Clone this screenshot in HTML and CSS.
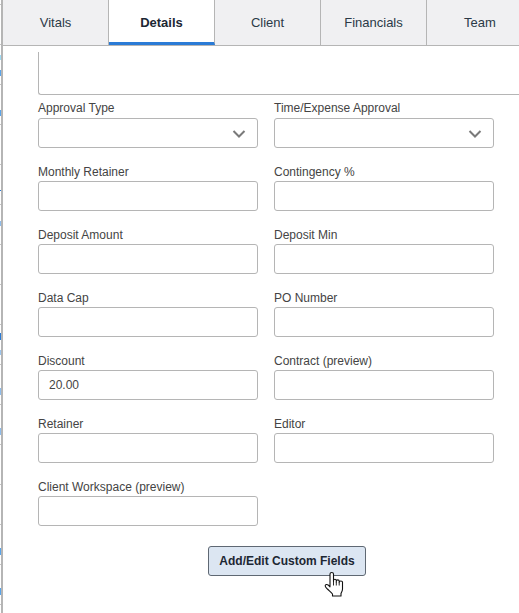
FILE: index.html
```html
<!DOCTYPE html>
<html lang="en">
<head>
<meta charset="utf-8">
<title>Details</title>
<link rel="stylesheet" href="styles.css">
</head>
<body>
<div class="page">
  <div class="strip"></div>
  <main class="main">
    <nav class="tabs">
      <a class="tab">Vitals</a>
      <a class="tab active">Details</a>
      <a class="tab">Client</a>
      <a class="tab">Financials</a>
      <a class="tab last">Team</a>
    </nav>
    <textarea class="notes"></textarea>
    <form class="form">
      <div class="field"><label>Approval Type</label>
        <div class="select"><select></select>
          <svg class="chev" viewBox="0 0 14 8" width="14" height="8"><path d="M1.5 1 7 6.5 12.5 1" fill="none" stroke="#7a7a7a" stroke-width="2"/></svg>
        </div></div>
      <div class="field"><label>Time/Expense Approval</label>
        <div class="select"><select></select>
          <svg class="chev" viewBox="0 0 14 8" width="14" height="8"><path d="M1.5 1 7 6.5 12.5 1" fill="none" stroke="#7a7a7a" stroke-width="2"/></svg>
        </div></div>
      <div class="field"><label>Monthly Retainer</label><input type="text"></div>
      <div class="field"><label>Contingency %</label><input type="text"></div>
      <div class="field"><label>Deposit Amount</label><input type="text"></div>
      <div class="field"><label>Deposit Min</label><input type="text"></div>
      <div class="field"><label>Data Cap</label><input type="text"></div>
      <div class="field"><label>PO Number</label><input type="text"></div>
      <div class="field"><label>Discount</label><input type="text" value="20.00"></div>
      <div class="field"><label>Contract (preview)</label><input type="text"></div>
      <div class="field"><label>Retainer</label><input type="text"></div>
      <div class="field"><label>Editor</label><input type="text"></div>
      <div class="field"><label>Client Workspace (preview)</label><input type="text"></div>
    </form>
    <div class="actions"><button type="button" class="btn">Add/Edit Custom Fields</button></div>
  </main>
</div>
<svg class="cursor" viewBox="0 0 20 26" width="20" height="26">
  <path d="M6 14.5V3C6 1 9.5 1 9.5 3V10.5V9.4C9.5 7.8 12.3 7.8 12.3 9.4V11V10C12.3 8.5 15.2 8.5 15.2 10V11.6V11C15.2 9.6 18.5 9.6 18.5 11V18C18.5 20 17.6 21 17 22.5V25H8.5V23C7 21.2 5.2 19.8 3.4 18 2.2 16.7 1 15.8 1.2 14.6 1.4 13.2 3.2 13.2 4.2 14 4.9 14.5 5.5 15.2 6 15.8Z" fill="#fff" stroke="#111" stroke-width="1.1" stroke-linejoin="round"/>
  <path d="M9.5 10.5V14.5M12.3 11V14.5M15.2 11.6V14.5" fill="none" stroke="#111" stroke-width=".9"/>
</svg>
</body>
</html>
```

FILE: styles.css
```css
* { box-sizing: border-box; }
html, body { margin: 0; padding: 0; background: #fff; }
body {
  width: 519px;
  height: 613px;
  overflow: hidden;
  position: relative;
  font-family: "Liberation Sans", Arial, sans-serif;
  color: #333;
}
.page { display: flex; height: 613px; }
.strip {
  flex: 0 0 3px;
  border-right: 2px solid #b5b5b5;
  background:
    linear-gradient(#9fdcf5,#9fdcf5) 0 55px/1px 5px no-repeat,
    linear-gradient(#5aa5ea,#5aa5ea) 0 70px/1px 6px no-repeat,
    linear-gradient(#5aa5ea,#5aa5ea) 0 110px/1px 6px no-repeat,
    linear-gradient(#2a7bd6,#2a7bd6) 0 190px/1px 1px no-repeat,
    linear-gradient(#8fbdec,#8fbdec) 0 221px/1px 5px no-repeat,
    linear-gradient(#2a7bd6,#2a7bd6) 0 333px/1px 7px no-repeat,
    linear-gradient(#9cc6ef,#9cc6ef) 0 350px/1px 5px no-repeat,
    linear-gradient(#8fbdec,#8fbdec) 0 388px/1px 7px no-repeat,
    linear-gradient(#8fbdec,#8fbdec) 0 428px/1px 7px no-repeat,
    linear-gradient(#5aa5ea,#5aa5ea) 0 548px/1px 7px no-repeat,
    linear-gradient(#5aa5ea,#5aa5ea) 0 588px/1px 7px no-repeat,
    repeating-linear-gradient(to bottom, transparent 0 4px, #c4c4c4 4px 5px, transparent 5px 40px);
}
.main { flex: 1; min-width: 0; overflow: hidden; }
.tabs {
  display: flex;
  height: 46px;
  background: #f0f0f2;
  border-bottom: 1px solid #b5b5b5;
}
.tab {
  flex: 0 0 106px;
  height: 45px;
  display: flex;
  align-items: center;
  justify-content: center;
  font-size: 13px;
  color: #2b3a47;
  border-right: 1px solid #b5b5b5;
}
.tab.last { border-right: 0; }
.tab.active {
  background: #fff;
  font-weight: 700;
  color: #1c2733;
  border-bottom: 3px solid #2a7bd6;
  padding-top: 3px;
}
.notes {
  display: block;
  width: 481px;
  height: 43px;
  margin: 6px 0 0 35px;
  padding: 0;
  border: 1px solid #b5b5b5;
  border-top: 0;
  border-right: 0;
  border-radius: 0 0 0 3px;
  background: #fff;
  resize: none;
  outline: none;
}
.form {
  display: grid;
  grid-template-columns: 220px 220px;
  column-gap: 16px;
  row-gap: 15px;
  margin: 5px 0 0 35px;
}
.field label {
  display: block;
  height: 16px;
  line-height: 18px;
  margin-bottom: 2px;
  font-size: 12px;
  color: #444;
}
.field:nth-child(-n+2) label { line-height: 16px; }
.field input, .field select {
  display: block;
  width: 220px;
  height: 30px;
  padding: 0 10px;
  border: 1px solid #b5b5b5;
  border-radius: 3px;
  background: #fff;
  font: 12px "Liberation Sans", Arial, sans-serif;
  color: #444;
  outline: none;
  appearance: none;
}
.select { position: relative; }
.chev { position: absolute; right: 12px; top: 12px; }
.actions { margin: 20px 0 0 205px; }
.btn {
  display: block;
  width: 158px;
  height: 30px;
  padding: 0;
  border: 1px solid #5f6873;
  border-radius: 3px;
  background: #dce6f2;
  font: 700 12px "Liberation Sans", Arial, sans-serif;
  color: #1c2733;
}
.cursor { position: absolute; left: 324px; top: 571px; }
```
